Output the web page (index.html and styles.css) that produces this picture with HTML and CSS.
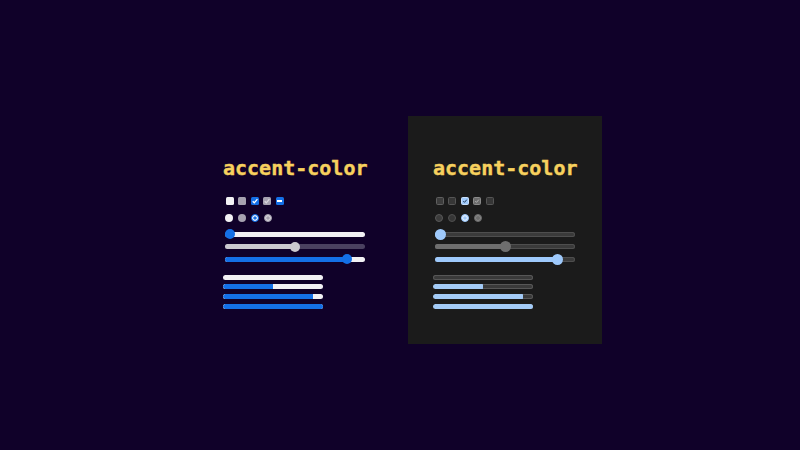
FILE: index.html
```html
<!DOCTYPE html>
<html>
<head>
    <title>accent-color</title>
    <link rel="stylesheet" href="styles.css">
</head>
<body>
    <main class="stage">
        <!-- light scheme -->
        <section class="panel light">
            <h1 class="title">accent-color</h1>
            <div class="checks">
                <span class="box"></span>
                <span class="box off"></span>
                <span class="box on"><svg viewBox="0 0 8 8"><polyline points="1.7,4.2 3.3,5.8 6.4,2.2"/></svg></span>
                <span class="box off on"><svg viewBox="0 0 8 8"><polyline points="1.7,4.2 3.3,5.8 6.4,2.2"/></svg></span>
                <span class="box on mixed"><i></i></span>
            </div>
            <div class="radios">
                <span class="dot"></span>
                <span class="dot off"></span>
                <span class="dot on"></span>
                <span class="dot off on"></span>
            </div>
            <div class="sliders">
                <div class="range"><div class="fill" style="width: 5px"></div><span class="thumb" style="left: 5px"></span></div>
                <div class="range off"><div class="fill" style="width: 70px"></div><span class="thumb" style="left: 70px"></span></div>
                <div class="range"><div class="fill" style="width: 122px"></div><span class="thumb" style="left: 122px"></span></div>
            </div>
            <div class="bars">
                <div class="bar"><div class="fill" style="width: 0%"></div></div>
                <div class="bar"><div class="fill" style="width: 50%"></div></div>
                <div class="bar"><div class="fill" style="width: 90%"></div></div>
                <div class="bar"><div class="fill" style="width: 100%"></div></div>
            </div>
        </section>

        <!-- dark scheme -->
        <section class="panel dark">
            <h1 class="title">accent-color</h1>
            <div class="checks">
                <span class="box"></span>
                <span class="box off"></span>
                <span class="box on"><svg viewBox="0 0 8 8"><polyline points="1.7,4.2 3.3,5.8 6.4,2.2"/></svg></span>
                <span class="box off on"><svg viewBox="0 0 8 8"><polyline points="1.7,4.2 3.3,5.8 6.4,2.2"/></svg></span>
                <span class="box off"></span>
            </div>
            <div class="radios">
                <span class="dot"></span>
                <span class="dot off"></span>
                <span class="dot on"></span>
                <span class="dot off on"></span>
            </div>
            <div class="sliders">
                <div class="range"><div class="fill" style="width: 5px"></div><span class="thumb" style="left: 5px"></span></div>
                <div class="range off"><div class="fill" style="width: 70px"></div><span class="thumb" style="left: 70px"></span></div>
                <div class="range"><div class="fill" style="width: 122px"></div><span class="thumb" style="left: 122px"></span></div>
            </div>
            <div class="bars">
                <div class="bar"><div class="fill" style="width: 0%"></div></div>
                <div class="bar"><div class="fill" style="width: 50%"></div></div>
                <div class="bar"><div class="fill" style="width: 90%"></div></div>
                <div class="bar"><div class="fill" style="width: 100%"></div></div>
            </div>
        </section>
    </main>
</body>
</html>
```
FILE: styles.css
```css
body {
    margin: 0;
    background-color: #100129;
    font-family: "DejaVu Sans Mono", "Liberation Mono", monospace;
}
.stage {
    display: flex;
    justify-content: center;
    gap: 16px;
    padding-top: 116px;
    height: 450px;
    box-sizing: border-box;
}
.panel {
    width: 194px;
    height: 228px;
    box-sizing: border-box;
    padding: 40px 25px 0;
    display: flex;
    flex-direction: column;
}
.panel.dark {
    background-color: #1b1b1b;
}
.title {
    margin: 0;
    font-size: 20px;
    line-height: 24px;
    font-weight: bold;
    white-space: nowrap;
    color: #f7d15e;
    -webkit-text-stroke: 0.4px #f7d15e;
}

/* checkboxes */
.checks {
    display: flex;
    gap: 4.5px;
    margin: 17px 0 0 2.5px;
}
.box {
    width: 8px;
    height: 8px;
    border-radius: 1.5px;
    box-sizing: border-box;
    display: flex;
    align-items: center;
    justify-content: center;
    background-color: #f2f1f4;
}
.box svg {
    width: 8px;
    height: 8px;
    fill: none;
    stroke: #fff;
    stroke-width: 1.3;
}
.box i {
    width: 5px;
    height: 1.5px;
    background-color: #fff;
}
.light .box.off { background-color: #a6a2b0; }
.light .box.on { background-color: #1470e6; }
.light .box.off.on { background-color: #a6a2b0; }
.light .box.off.on svg { stroke: #d9d7dd; }

.dark .box {
    background-color: #3c3c3c;
    border: 1px solid #5f5f5f;
}
.dark .box.off { background-color: #363636; border-color: #555; }
.dark .box.on { background-color: #9ec9fb; border-color: #c8e0fc; }
.dark .box.on svg { stroke: #1d3552; }
.dark .box.off.on { background-color: #6c6c6c; border-color: #8a8a8a; }
.dark .box.off.on svg { stroke: #b5b5b5; }

/* radios */
.radios {
    display: flex;
    gap: 5px;
    margin: 9px 0 0 2px;
}
.dot {
    width: 8px;
    height: 8px;
    border-radius: 50%;
    box-sizing: border-box;
    background-color: #f2f1f4;
}
.light .dot.off { background-color: #a6a2b0; }
.light .dot.on {
    background-color: #1470e6;
    border: 1.5px solid #1470e6;
    box-shadow: inset 0 0 0 1.2px #fff;
}
.light .dot.off.on {
    background-color: #a6a2b0;
    border-color: #a6a2b0;
    box-shadow: inset 0 0 0 1.2px #d9d7dd;
}
.dark .dot {
    background-color: #3c3c3c;
    border: 1px solid #595959;
}
.dark .dot.off { background-color: #363636; border-color: #505050; }
.dark .dot.on {
    background-color: #9ec9fb;
    border: 1.5px solid #9ec9fb;
    box-shadow: inset 0 0 0 1.2px #e6f1fe;
}
.dark .dot.off.on {
    background-color: #6c6c6c;
    border-color: #6c6c6c;
    box-shadow: inset 0 0 0 1px #8a8a8a;
}

/* range sliders */
.sliders {
    display: flex;
    flex-direction: column;
    gap: 2.5px;
    margin: 7px 0 0 2px;
}
.range {
    position: relative;
    width: 140px;
    height: 10px;
    display: flex;
    align-items: center;
}
.range::before {
    content: "";
    position: absolute;
    left: 0;
    right: 0;
    top: 2.5px;
    height: 5px;
    border-radius: 3px;
    background-color: #f2f1f4;
}
.range .fill {
    position: relative;
    height: 5px;
    border-radius: 3px;
    background-color: #1470e6;
}
.range .thumb {
    position: absolute;
    top: 0;
    width: 10px;
    height: 10px;
    margin-left: -5px;
    border-radius: 50%;
    background-color: #1470e6;
}
.light .range.off::before { background-color: #4a4160; }
.light .range.off .fill,
.light .range.off .thumb { background-color: #cbc9cf; }

.dark .range::before {
    background-color: #3a3a3a;
    box-shadow: inset 0 0 0 1px #4e4e4e;
}
.dark .range .fill,
.dark .range .thumb { background-color: #9ec9fb; }
.dark .range .thumb {
    width: 11px;
    height: 11px;
    top: -0.5px;
    margin-left: -5.5px;
}
.dark .range.off .fill,
.dark .range.off .thumb { background-color: #6e6e6e; }

/* progress bars */
.bars {
    display: flex;
    flex-direction: column;
    gap: 4.8px;
    margin-top: 10.6px;
}
.bar {
    width: 100px;
    height: 5px;
    border-radius: 3px;
    overflow: hidden;
    background-color: #f2f1f4;
}
.bar .fill {
    height: 100%;
    border-radius: 3px 0 0 3px;
    background-color: #1470e6;
}
.dark .bar {
    background-color: #3a3a3a;
    box-shadow: inset 0 0 0 1px #575757;
}
.dark .bar .fill {
    border-radius: 3px 1px 1px 3px;
    background-color: #a3cbf7;
}
```
